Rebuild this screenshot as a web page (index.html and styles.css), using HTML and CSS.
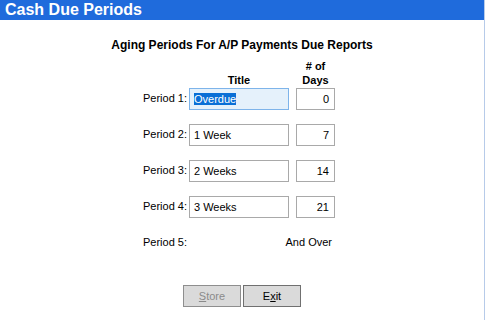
FILE: index.html
```html
<!DOCTYPE html>
<html>
<head>
<meta charset="utf-8">
<link rel="stylesheet" href="styles.css">
</head>
<body>
<div class="page">
  <div class="titlebar">Cash Due Periods</div>
  <div class="content">
    <h1 class="heading">Aging Periods For A/P Payments Due Reports</h1>
    <div class="form form-head">
      <div class="label"></div>
      <div class="colhead col-title">Title</div>
      <div class="colhead">#&nbsp;of<br>Days</div>
    </div>
    <div class="form">
      <div class="label">Period 1:</div>
      <div class="field field-active"><span class="sel">Overdue</span></div>
      <div class="field num">0</div>

      <div class="label">Period 2:</div>
      <div class="field">1 Week</div>
      <div class="field num">7</div>

      <div class="label">Period 3:</div>
      <div class="field">2 Weeks</div>
      <div class="field num">14</div>

      <div class="label">Period 4:</div>
      <div class="field">3 Weeks</div>
      <div class="field num">21</div>

      <div class="label">Period 5:</div>
      <div class="over">And Over</div>
    </div>
    <div class="buttons">
      <button class="btn btn-disabled"><u>S</u>tore</button>
      <button class="btn">E<u>x</u>it</button>
    </div>
  </div>
</div>
</body>
</html>
```

FILE: styles.css
```css
html, body {
  margin: 0;
  padding: 0;
  background: #ffffff;
}
body {
  font-family: "Liberation Sans", Arial, sans-serif;
  font-size: 11px;
  color: #000;
}
.page {
  width: 484px;
  height: 320px;
  border-right: 1px solid #b7cbe9;
}
.titlebar {
  height: 20px;
  background: #1f6bdc;
  color: #fff;
  font-weight: bold;
  font-size: 16px;
  line-height: 20px;
  padding-left: 5px;
}
.content {
  display: flex;
  flex-direction: column;
}
.heading {
  margin: 18px 0 0 0;
  font-size: 12px;
  font-weight: bold;
  text-align: center;
  line-height: 14px;
}
.form {
  display: grid;
  grid-template-columns: 189px 107px 39px;
  grid-auto-rows: 22px;
  row-gap: 14px;
}
.form-head {
  grid-auto-rows: auto;
  margin-top: 7px;
  margin-bottom: 1px;
}
.colhead {
  font-weight: bold;
  text-align: center;
  line-height: 14px;
  align-self: end;
}
.col-title {
  width: 100px;
}
.label {
  text-align: right;
  padding-right: 2px;
  line-height: 20px;
}
.field {
  box-sizing: border-box;
  width: 100%;
  height: 22px;
  border: 1px solid #a9a9a9;
  padding: 0 4px;
  line-height: 20px;
  background: #fff;
}
.form > .field:not(.num) {
  width: 100px;
}
.field-active {
  border-color: #7eb4ea;
  background: #e5f1fb;
}
.sel {
  background: #0a6fd6;
  color: #fff;
}
.num {
  text-align: right;
  padding-right: 5px;
}
.over {
  grid-column: 2 / 4;
  text-align: right;
  padding-right: 3px;
  line-height: 20px;
}
.buttons {
  display: flex;
  justify-content: center;
  gap: 2px;
  margin-top: 31px;
}
.btn {
  width: 58px;
  height: 22px;
  background: #dadada;
  border: 1px solid #707070;
  font-family: "Liberation Sans", Arial, sans-serif;
  font-size: 11px;
  color: #000;
  padding: 0;
}
.btn-disabled {
  color: #8a8a8a;
  border-color: #8e8e8e;
}
```
